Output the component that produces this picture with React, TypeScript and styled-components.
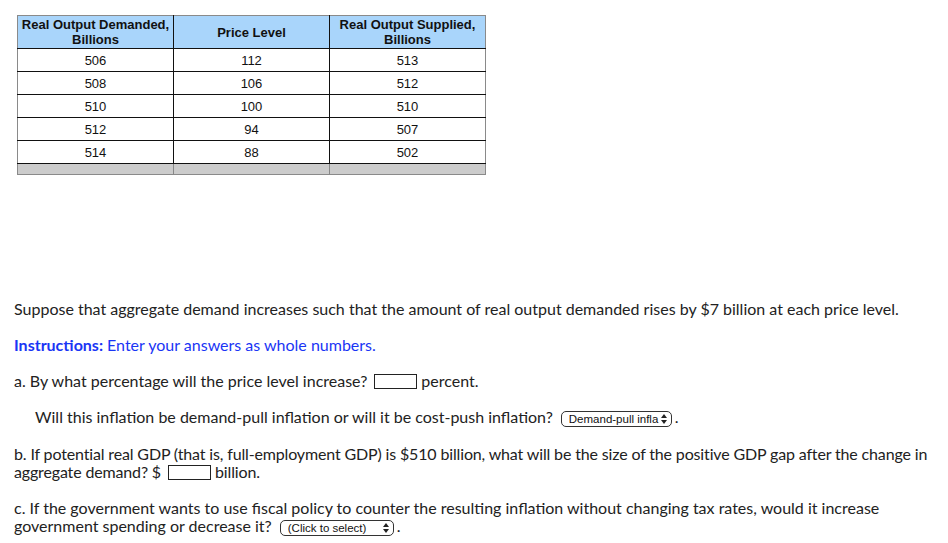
import React from "react";
import styled, { createGlobalStyle } from "styled-components";

const GlobalStyle = createGlobalStyle`
  html, body {
    margin: 0;
    padding: 0;
    background: #ffffff;
  }
`;

const Page = styled.div`
  width: 948px;
  height: 543px;
  overflow: hidden;
  padding: 15px 0 0 14px;
  box-sizing: border-box;
  font-family: "Lato", "Open Sans", sans-serif;
  font-size: 16px;
  color: #222;
`;

const Table = styled.table`
  margin-left: 3px;
  width: 469px;
  border-collapse: collapse;
  border: 1px solid #8a8a8a;
  font-family: "Liberation Sans", Arial, sans-serif;
  font-size: 13px;
  color: #111;
  table-layout: fixed;
`;

const HeadCell = styled.th`
  background: #a9d5fb;
  font-weight: bold;
  text-align: center;
  height: 32px;
  padding: 0 2px;
  line-height: 15px;
  border-left: 1px solid #111;
  border-bottom: 1px solid #111;
  &:first-child {
    border-left: none;
  }
`;

const Cell = styled.td`
  text-align: center;
  height: 22px;
  padding: 0;
  line-height: 15px;
  border-left: 1px solid #111;
  border-bottom: 1px solid #111;
  &:first-child {
    border-left: none;
  }
`;

const FootCell = styled.td`
  background: #cccccc;
  height: 10px;
  padding: 0;
  border-left: 1px solid #888;
  &:first-child {
    border-left: none;
  }
`;

const Questions = styled.div`
  margin-top: 125px;
  width: 934px;
`;

const Para = styled.p<{ indent?: boolean; tight?: boolean }>`
  margin: 0 0 18px;
  line-height: 18px;
  padding-left: ${(p) => (p.indent ? "21px" : "0")};
  letter-spacing: ${(p) => (p.tight ? "-0.15px" : "normal")};
`;

const Blue = styled.span`
  color: #1a35f5;
`;

const Bold = styled.b`
  font-weight: 700;
`;

const AnswerBox = styled.span`
  display: inline-block;
  width: 41px;
  height: 13px;
  border: 1px solid #222;
  vertical-align: -2px;
  margin: 0 4px 0 7px;
`;

const Select = styled.span<{ w: number }>`
  display: inline-flex;
  align-items: center;
  box-sizing: border-box;
  width: ${(p) => p.w}px;
  height: 16px;
  padding: 0 4px 0 7px;
  border: 1px solid #333;
  border-radius: 5px;
  font-family: "Liberation Sans", Arial, sans-serif;
  font-size: 11.5px;
  letter-spacing: 0;
  line-height: 14px;
  color: #111;
  vertical-align: middle;
  margin: 0 3px 0 8px;
  white-space: nowrap;
  overflow: hidden;
`;

const SelectLabel = styled.span`
  flex: 1;
  min-width: 0;
  overflow: hidden;
  margin-right: 2px;
`;

const Arrows = () => (
  <svg width="6" height="10" viewBox="0 0 6 10">
    <path d="M0 4 L3 0 L6 4 Z M0 6 L3 10 L6 6 Z" fill="#222" />
  </svg>
);

const rows = [
  [506, 112, 513],
  [508, 106, 512],
  [510, 100, 510],
  [512, 94, 507],
  [514, 88, 502],
];

export default function App() {
  return (
    <Page>
      <GlobalStyle />
      <Table>
        <thead>
          <tr>
            <HeadCell>
              Real Output Demanded,
              <br />
              Billions
            </HeadCell>
            <HeadCell>Price Level</HeadCell>
            <HeadCell>
              Real Output Supplied,
              <br />
              Billions
            </HeadCell>
          </tr>
        </thead>
        <tbody>
          {rows.map((r, i) => (
            <tr key={i}>
              {r.map((v, j) => (
                <Cell key={j}>{v}</Cell>
              ))}
            </tr>
          ))}
          <tr>
            <FootCell />
            <FootCell />
            <FootCell />
          </tr>
        </tbody>
      </Table>
      <Questions>
        <Para>
          Suppose that aggregate demand increases such that the amount of real
          output demanded rises by $7 billion at each price level.
        </Para>
        <Para>
          <Blue>
            <Bold>Instructions:</Bold> Enter your answers as whole numbers.
          </Blue>
        </Para>
        <Para>
          a. By what percentage will the price level increase?
          <AnswerBox />
          percent.
        </Para>
        <Para indent>
          Will this inflation be demand-pull inflation or will it be cost-push
          inflation?
          <Select w={111}>
            <SelectLabel>Demand-pull infla</SelectLabel>
            <Arrows />
          </Select>
          .
        </Para>
        <Para tight>
          b. If potential real GDP (that is, full-employment GDP) is $510
          billion, what will be the size of the positive GDP gap after the
          change in aggregate demand? $
          <AnswerBox />
          billion.
        </Para>
        <Para>
          c. If the government wants to use fiscal policy to counter the
          resulting inflation without changing tax rates, would it increase
          government spending or decrease it?
          <Select w={114}>
            <SelectLabel>(Click to select)</SelectLabel>
            <Arrows />
          </Select>
          .
        </Para>
      </Questions>
    </Page>
  );
}
